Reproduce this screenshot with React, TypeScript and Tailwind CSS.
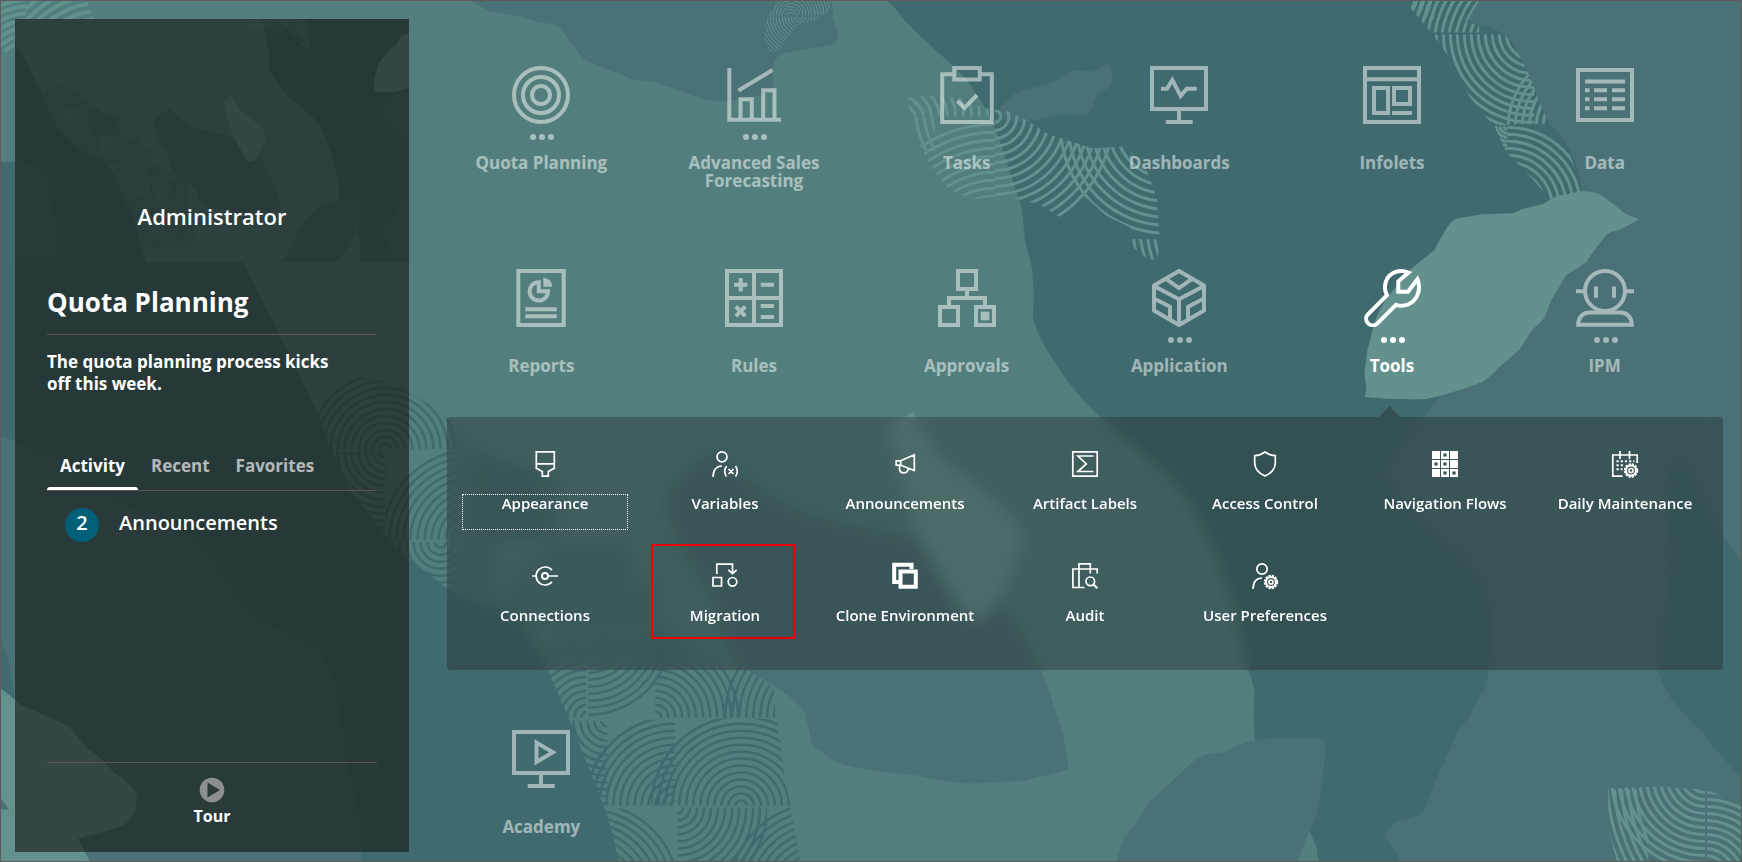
import { useState } from "react";
import type { ReactNode } from "react";
import { clsx } from "clsx";

/* ─── Wallpaper ──────────────────────────────────────────────────────────── */
type ArcSet = {
  cx: number;
  cy: number;
  from: number;
  to: number;
  step: number;
  /* visible window of the set: x, y, width, height */
  box: [number, number, number, number];
};

const SNAKE_ARCS: ArcSet[] = [
  { cx: 385, cy: 450, from: 6, to: 78, step: 7, box: [300, 360, 180, 89] },
  { cx: 385, cy: 452, from: 6, to: 92, step: 7, box: [300, 452, 85, 88] },
  { cx: 472, cy: 540, from: 6, to: 92, step: 7, box: [385, 452, 160, 88] },
  { cx: 540, cy: 470, from: 6, to: 92, step: 7, box: [472, 440, 90, 100] },
  { cx: 440, cy: 542, from: 6, to: 92, step: 7, box: [360, 542, 140, 88] },
  { cx: 590, cy: 630, from: 6, to: 92, step: 7, box: [500, 542, 160, 88] },
  { cx: 587, cy: 718, from: 6, to: 88, step: 7, box: [500, 632, 86, 86] },
  { cx: 588, cy: 632, from: 6, to: 88, step: 7, box: [588, 632, 90, 87] },
  { cx: 655, cy: 718, from: 6, to: 88, step: 7, box: [655, 632, 90, 86] },
  { cx: 822, cy: 718, from: 48, to: 102, step: 7, box: [715, 632, 60, 86] },
  { cx: 607, cy: 721, from: 6, to: 90, step: 7, box: [540, 721, 67, 85] },
  { cx: 675, cy: 807, from: 6, to: 92, step: 7, box: [585, 720, 90, 86] },
  { cx: 741, cy: 807, from: 6, to: 92, step: 7, box: [651, 719, 140, 87] },
  { cx: 587, cy: 895, from: 50, to: 92, step: 7, box: [587, 809, 90, 86] },
  { cx: 677, cy: 808, from: 6, to: 90, step: 7, box: [677, 808, 90, 87] },
  { cx: 820, cy: 895, from: 42, to: 92, step: 7, box: [720, 808, 90, 87] },
];

const TASKS_ARCS: ArcSet[] = [
  { cx: 995, cy: 258, from: 62, to: 140, step: 8, box: [900, 118, 95, 90] },
  { cx: 995, cy: 116, from: 6, to: 122, step: 8, box: [995, 108, 120, 130] },
  { cx: 1167, cy: 127, from: 42, to: 112, step: 8, box: [1055, 120, 110, 116] },
  { cx: 900, cy: 120, from: 8, to: 95, step: 8, box: [900, 92, 100, 24] },
  { cx: 1000, cy: 110, from: 68, to: 90, step: 8, box: [905, 117, 30, 34] },
  { cx: 1290, cy: 215, from: 130, to: 160, step: 7, box: [1120, 239, 40, 24] },
];

const RIBBON_ARCS: ArcSet[] = [
  { cx: 1540, cy: 50, from: 50, to: 140, step: 7, box: [1400, 0, 80, 32] },
  { cx: 1350, cy: -20, from: 70, to: 100, step: 7, box: [1405, 0, 30, 20] },
  { cx: 1533, cy: 33, from: 12, to: 96, step: 7, box: [1435, 34, 100, 91] },
  { cx: 1587, cy: 127, from: 36, to: 80, step: 7, box: [1505, 70, 50, 54] },
  { cx: 1508, cy: 207, from: 38, to: 82, step: 7, box: [1508, 126, 80, 80] },
  { cx: 1508, cy: 126, from: 3, to: 24, step: 4, box: [1490, 126, 18, 24] },
];

const CORNER_ARCS: ArcSet[] = [
  { cx: 1706, cy: 776, from: 10, to: 98, step: 7, box: [1609, 786, 97, 80] },
  { cx: 1706, cy: 880, from: 10, to: 90, step: 7, box: [1708, 786, 40, 80] },
  { cx: 1790, cy: 780, from: 154, to: 196, step: 7, box: [1609, 790, 40, 76] },
];

const FINGER_ARCS: ArcSet[] = [
  { cx: 791, cy: 15, from: 3, to: 46, step: 3, box: [760, 0, 80, 15] },
  { cx: 800, cy: 16, from: 3, to: 46, step: 3, box: [760, 16, 60, 38] },
];

const TOP_LEFT_ARCS: ArcSet[] = [
  { cx: 102, cy: 90, from: 64, to: 112, step: 8, box: [25, 0, 70, 20] },
  { cx: 34, cy: 90, from: 50, to: 98, step: 7, box: [0, 0, 25, 70] },
];

function arcPath({ cx, cy, from, to, step }: ArcSet) {
  let d = "";
  for (let r = from; r <= to; r += step) {
    d += `M${cx - r} ${cy}a${r} ${r} 0 1 1 ${2 * r} 0a${r} ${r} 0 1 1 ${-2 * r} 0`;
  }
  return d;
}

function ArcGroup({ id, sets, color, outline, width = 3 }: {
  id: string;
  sets: ArcSet[];
  color: string;
  outline: string;
  width?: number;
}) {
  return (
    <g clipPath={`url(#${id})`} fill="none" stroke={color} strokeWidth={width}>
      <clipPath id={id}>
        <path d={outline} />
      </clipPath>
      {sets.map((set, i) => (
        <g key={i} clipPath={`url(#${id}-${i})`}>
          <clipPath id={`${id}-${i}`}>
            <rect x={set.box[0]} y={set.box[1]} width={set.box[2]} height={set.box[3]} />
          </clipPath>
          <path d={arcPath(set)} />
        </g>
      ))}
    </g>
  );
}

function Wallpaper() {
  return (
    <svg
      aria-hidden="true"
      viewBox="0 0 1742 862"
      preserveAspectRatio="xMidYMid slice"
      className="absolute inset-0 h-full w-full"
    >
      <g id="wallpaper">
        <rect width="1742" height="960" fill="#406b6e" />
        {/* light continent */}
        <path
          fill="#527f7d"
          d="M0 0H887Q896 8 905 20L922 37L947 60L966 78L987 110L995 127L1003 150L1017 193L1022 207L1025 240L1032 267Q1035 292 1033 317Q1038 334 1047 350L1067 380L1083 400L1100 417L1135 445L1173 480Q1198 510 1213 543L1233 600L1249 670L1255 690L1254 720L1256 745L1310 831L1317 847L1319 862L1322 940H645L619 862L606 813L569 720L547 670Q530 620 490 608Q455 598 440 583L410 561L383 534L350 491L327 441L317 413L302 383L273 323L242 262Q190 190 60 166L15 161L0 162Z"
        />
        {/* grey shapes */}
        <g fill="#4a7276">
          <path d="M469 0L490 11L515 15L539 22Q556 23 561 29L570 42L583 58Q600 68 620 73L632 79L653 81L687 93Q705 100 717 101L733 100L760 95Q772 92 773 83L773 67Q774 56 783 53L833 44Q838 40 838 33L833 17L832 0Z" />
          <path d="M1000 108L1013 95Q1018 91 1027 89L1053 82L1072 70L1090 71Q1100 70 1108 62Q1114 72 1111 83Q1109 90 1098 92L1090 112Q1086 116 1078 115L1060 114L1043 118L1023 122L1005 120Z" />
          <path d="M1480 0L1467 20L1490 26L1502 32L1513 42L1528 70L1548 120L1567 143Q1580 165 1584 192L1500 300L1438 400L1425 417L1400 450Q1388 464 1390 480L1417 517L1460 553Q1480 570 1487 593L1492 627L1489 673L1485 690L1477 702Q1470 720 1458 732L1452 747L1438 777L1430 797Q1426 811 1421 815L1398 822Q1387 829 1385 837Q1396 848 1400 862L1427 940H1742V0Z" />
          <path d="M714 450L700 462Q672 478 667 500Q668 530 693 567L710 592L729 655L747 670L772 685Q793 697 805 713L811 740Q812 748 820 751Q836 765 855 768L879 772L917 776L942 781Q958 784 975 784L1025 781L1069 770L1064 737L1049 690L1041 670L1023 633Q1014 618 1003 608L950 560Q930 542 880 532L833 522L793 510L747 480Z" />
          <path d="M1061 940L1098 900L1117 862Q1121 844 1125 837L1134 827L1150 802L1171 783L1190 765Q1202 754 1208 754Q1220 754 1223 753L1236 746L1256 740Q1285 738 1321 739Q1326 739 1326 742L1324 773Q1320 797 1317 817L1310 831L1298 862Q1284 900 1242 940Z" />
          <path d="M0 436L33 449Q65 462 73 475L100 494L133 509L150 513L187 534L213 558L227 584L260 621L290 634L320 651L333 678L340 721L347 764L357 808L361 862L358 940H0Z" />
        </g>
        <g fill="#406b6e">
          <path d="M1673 460Q1687 455 1693 468L1707 507L1722 533L1733 547L1742 563V778L1714 747L1706 734L1697 728L1690 719L1674 702Q1664 688 1659 670L1660 633L1670 600L1673 550L1667 493Z" />
          <path d="M0 643L7 658Q9 675 13 691L14 702L0 690Z" />
        </g>
        {/* bright leaves */}
        <g fill="#63918e">
          <path d="M1365 397L1367 390L1365 373L1368 350L1375 323Q1379 310 1388 297L1410 270L1435 250L1443 235L1450 224Q1454 219 1459 218L1483 214L1513 213Q1519 211 1523 209L1543 204L1557 196L1583 191Q1594 191 1600 194Q1607 198 1613 203L1627 214L1640 219L1620 230Q1611 231 1607 235L1595 250L1587 262L1567 275L1552 300L1545 318L1533 330L1520 350L1500 367Q1491 377 1483 382L1467 388L1440 396L1427 399Q1395 400 1365 397Z" />
          <path d="M913 412L900 420Q888 422 890 435L900 477L917 533L940 577L963 613Q974 628 990 613Q1012 580 1022 543Q1022 525 1007 510L980 487L940 457Z" />
          <path d="M0 689L13 699Q21 708 33 711L67 726L87 749L96 755L113 773Q134 787 136 797Q136 812 130 818Q125 826 117 828L77 839L89 862L110 940H0V810L8 810L0 799Z" />
        </g>
        <ArcGroup
          id="snake"
          sets={SNAKE_ARCS}
          color="#406b6e"
          width={2.5}
          outline="M317 413L319 392Q335 375 351 377Q370 377 393 384L435 408L498 461L541 471L604 508L630 540L636 588L651 577L688 604L730 656L773 688L784 773L800 862V940H645L619 862L606 813L569 720L547 670Q530 620 490 608Q455 598 440 583L410 561L383 534L350 491L327 441Z"
        />
        <ArcGroup
          id="whale"
          sets={TASKS_ARCS}
          color="#63918e"
          outline="M907 98L925 95L960 97L985 108L1008 111L1027 120L1047 133L1067 140L1093 148L1127 146L1147 170L1157 197L1160 237L1158 260L1148 259L1131 245L1130 227L1107 216L1087 198L1060 217L1040 204L1017 199L997 196L973 199L950 190L933 170L920 145L913 127Z"
        />
        <ArcGroup
          id="ribbon"
          sets={RIBBON_ARCS}
          color="#63918e"
          outline="M1405 0H1480L1467 22L1490 26L1502 32L1513 42L1528 70L1548 120L1567 143L1584 192L1552 200L1530 175L1507 152L1496 128L1470 96L1452 60L1432 32Z"
        />
        <ArcGroup
          id="corner"
          sets={CORNER_ARCS}
          color="#63918e"
          outline="M1609 789L1658 787L1705 790L1742 803V862H1618L1609 830Z"
        />
        <ArcGroup
          id="finger"
          sets={FINGER_ARCS}
          color="#63918e"
          width={1}
          outline="M776 0H832L828 12L815 20L798 24L788 36L780 49L771 52L764 40L765 25L770 12Z"
        />
        <ArcGroup
          id="topleft"
          sets={TOP_LEFT_ARCS}
          color="#63918e"
          width={4}
          outline="M0 0H86L94 20L40 40L15 70L0 45Z"
        />
      </g>
    </svg>
  );
}

/* ─── Large icons (58 × 58) ──────────────────────────────────────────────── */
function BigIcon({ children }: { children: ReactNode }) {
  return (
    <svg
      aria-hidden="true"
      viewBox="0 0 58 58"
      fill="none"
      stroke="currentColor"
      strokeWidth="4"
      className="h-[58px] w-[58px]"
    >
      {children}
    </svg>
  );
}

const MONITOR = <path d="M2 2h54v41H2zM29 43v13M15.7 56h27" />;

const BIG_ICONS: Record<string, ReactNode> = {
  target: (
    <>
      <circle cx="29" cy="29" r="27" />
      <circle cx="29" cy="29" r="18" />
      <circle cx="29" cy="29" r="9" />
    </>
  ),
  forecast: <path d="M4.3 2v51.7H56M15.5 53V33.3h11.3V53M38.2 53V24.3h11.3V53M13.5 24.5L47.5 4" />,
  tasks: <path d="M14.3 8.2H4.2V56h49.6V8.2H43.7M16.3 2h25.4v11.5H16.3zM19.5 35l7 7L39 29" />,
  dashboards: (
    <>
      {MONITOR}
      <path d="M11 22.7h6l5.3-8.7 8.4 16 6-7.3h10" />
    </>
  ),
  infolets: <path d="M2 2h54v54H2zM2 13.2h54M11 22h14v25H11zM31 22h16v16H31zM29 47h20" />,
  data: (
    <path d="M2 4h54v50H2zM9 15.5h40M9 24.3h4.5M18 24.3h13M36 24.3h13M9 33.3h4.5M18 33.3h13M36 33.3h13M9 42.3h4.5M18 42.3h13M36 42.3h13" />
  ),
  reports: (
    <>
      <path d="M6.3 2h45.4v54H6.3zM13.3 40.2h31.4M13.3 47.2h31.4M26.8 13.2V22.3H36A9.2 9.2 0 1 1 26.8 13.2z" />
      <path d="M31.3 8.7a9 9 0 0 1 9 9h-9z" fill="currentColor" stroke="none" />
    </>
  ),
  rules: (
    <path d="M2 2h54v54H2zM29 2v54M2 29h54M15.7 9v13.4M9 15.7h13.4M35.7 15.7H49M10.8 37.5l9.6 9.6M20.4 37.5l-9.6 9.6M35.7 37H49M35.7 48H49" />
  ),
  approvals: (
    <>
      <path d="M20 2h18v18H20zM29 20v9M11 38v-9h36v9M2 38h18v18H2zM38 38h18v18H38z" />
      <path d="M42.7 42.7h8.6v8.6h-8.6z" fill="currentColor" stroke="none" />
    </>
  ),
  application: (
    <path
      strokeLinejoin="round"
      d="M29 2L54 16.5v25L29 56 4 41.5v-25zM4 17l25 13.3L54 17M29 30.3V56M16 9.8l13 9.4 13-9.4M4 29.5l16 8.2V51M54 29.5l-16 8.2V51"
    />
  ),
  tools: (
    <path d="M45.5 3.6C35 -.6 23 4.5 22 17c-.3 3.4.4 6.4 2 9.2L4.7 45.5a6.6 6.6 0 0 0 9.3 9.3L33 35.8c4 1.4 8.2 1.3 12-.3C55 31 58.3 20 54.4 10.3L45 22.7h-9.7V12.3z" />
  ),
  ipm: (
    <>
      <circle cx="29" cy="22" r="20" />
      <path d="M0 22.3h8M50 22.3h8M20 17.5v11.3M38 17.5v11.3M2.2 55.8h53.6c0-7.5-4.8-12.3-11-12.3H13.2C7 43.5 2.2 48.3 2.2 55.8z" />
    </>
  ),
  academy: (
    <>
      {MONITOR}
      <path d="M24.5 12.6L41 22.3L24.5 32z" />
    </>
  ),
};

/* ─── Small icons (26 × 26) ──────────────────────────────────────────────── */
function SmallIcon({ children }: { children: ReactNode }) {
  return (
    <svg
      aria-hidden="true"
      viewBox="0 0 26 26"
      fill="none"
      stroke="currentColor"
      strokeWidth="1.7"
      className="h-[26px] w-[26px] overflow-visible"
    >
      {children}
    </svg>
  );
}

function Gear({ cx, cy }: { cx: number; cy: number }) {
  return (
    <>
      <circle cx={cx} cy={cy} r="6" fill="currentColor" stroke="none" />
      <circle cx={cx} cy={cy} r="6.2" strokeWidth="2" strokeDasharray="2.2 1.05" />
      <circle cx={cx} cy={cy} r="3.4" stroke="#3d5558" strokeWidth="1.1" />
      <circle cx={cx} cy={cy} r="1.2" fill="#3d5558" stroke="none" />
    </>
  );
}

const FLOW_CELLS = [1, 0, 1, 0, 0, 1, 1, 0, 0];

const SMALL_ICONS: Record<string, ReactNode> = {
  appearance: <path d="M4.3.8h18v16.4l-6 3.3v4.7h-6v-4.7l-6-3.3zM4.3 12.8h18" />,
  variables: (
    <>
      <circle cx="10" cy="5.8" r="5" />
      <path d="M1 26c.3-7 3-11 9-11M14.5 15c-2.3 3.4-2.3 7.4 0 10.5M23.5 15c2.3 3.4 2.3 7.4 0 10.5M16.5 18l5 5M21.5 18l-5 5" />
    </>
  ),
  announcements: (
    <path d="M22.3 3.8v15.8L8.7 14.2V9.8zM8.7 9.8H4.2v4.4h4.5M7.5 14.5v2.7c0 6.3 8.7 6 8.7.3" />
  ),
  artifact: <path d="M.8.8h24.4v24.4H.8zM21.5 5H6l8.3 8L6 20.5h15.5" />,
  access: (
    <path d="M13 1c3 2.3 6.5 3.5 10.3 3.7v7c0 6-4 10.5-10.3 13.3C6.7 22.2 2.7 17.7 2.7 11.7v-7C6.5 4.5 10 3.3 13 1z" />
  ),
  flows: (
    <>
      {FLOW_CELLS.map((solid, i) => (
        <rect
          key={i}
          x={(i % 3) * 9 + 1.2}
          y={Math.floor(i / 3) * 9 + 1.2}
          width="5.6"
          height="5.6"
          strokeWidth="2.4"
          fill={solid ? "currentColor" : "none"}
        />
      ))}
    </>
  ),
  maintenance: (
    <>
      <path d="M10.5 25.2H.8V4h24.4v8M8 0v8M17.5 0v8" />
      <path d="M4.5 10.3h18M4.5 14.3h8M4.5 18.3h6" strokeDasharray="2.2 2" strokeWidth="2" />
      <Gear cx={19} cy={19.5} />
    </>
  ),
  connections: (
    <>
      <path d="M20 7.2A9 9 0 1 0 20 18.8M.3 13h3.7M16 13h10" />
      <circle cx="13" cy="13" r="3" strokeWidth="2" />
    </>
  ),
  migration: (
    <>
      <path d="M1 14.5h8.5V23H1zM4.8 11V1.2h15.7v9M16.3 6.8l4.2 3.9 4.2-3.9" />
      <circle cx="20.5" cy="18.8" r="4.3" />
    </>
  ),
  clone: (
    <path d="M19.5 6V1.8H2.2V19H7M8.5 8.5h15.3v15.3H8.5z" strokeWidth="4" />
  ),
  audit: (
    <>
      <path d="M12.5 24.5H.9V6h24.3v4.5M7 24.5V.8h11.3v9.7" />
      <circle cx="18.3" cy="18.3" r="4.3" />
      <path d="M21.5 21.5l3.8 3.7" strokeWidth="2" />
    </>
  ),
  preferences: (
    <>
      <circle cx="10" cy="6" r="5.2" />
      <path d="M1 26c.3-7 3-11 9-11" />
      <Gear cx={19} cy={19} />
    </>
  ),
};

/* ─── Data ───────────────────────────────────────────────────────────────── */
type Tile = { label: string; icon: string; more?: boolean };

const TILES: Tile[] = [
  { label: "Quota Planning", icon: "target", more: true },
  { label: "Advanced Sales Forecasting", icon: "forecast", more: true },
  { label: "Tasks", icon: "tasks" },
  { label: "Dashboards", icon: "dashboards" },
  { label: "Infolets", icon: "infolets" },
  { label: "Data", icon: "data" },
  { label: "Reports", icon: "reports" },
  { label: "Rules", icon: "rules" },
  { label: "Approvals", icon: "approvals" },
  { label: "Application", icon: "application", more: true },
  { label: "Tools", icon: "tools", more: true },
  { label: "IPM", icon: "ipm", more: true },
];

const TOOLS = [
  { label: "Appearance", icon: "appearance", focused: true },
  { label: "Variables", icon: "variables" },
  { label: "Announcements", icon: "announcements" },
  { label: "Artifact Labels", icon: "artifact" },
  { label: "Access Control", icon: "access" },
  { label: "Navigation Flows", icon: "flows" },
  { label: "Daily Maintenance", icon: "maintenance" },
  { label: "Connections", icon: "connections" },
  { label: "Migration", icon: "migration", marked: true },
  { label: "Clone Environment", icon: "clone" },
  { label: "Audit", icon: "audit" },
  { label: "User Preferences", icon: "preferences" },
];

const TABS = ["Activity", "Recent", "Favorites"];

/* ─── Sidebar ────────────────────────────────────────────────────────────── */
function Sidebar() {
  const [tab, setTab] = useState("Activity");

  return (
    <aside className="relative mt-[18px] mb-[9px] ml-[14px] flex w-[394px] shrink-0 flex-col text-white">
      <div className="relative flex h-[243px] items-end justify-center overflow-hidden pb-[30px]">
        <svg
          aria-hidden="true"
          viewBox="229 168 1247 769"
          preserveAspectRatio="xMidYMid slice"
          className="absolute inset-0 h-full w-full"
        >
          <use href="#wallpaper" />
        </svg>
        <div className="absolute inset-0 bg-[#161513]/60" />
        <p className="relative text-[22px] leading-8 font-semibold">Administrator</p>
      </div>

      <div className="flex flex-1 flex-col bg-[#161513]/60 px-8 pt-5">
        <h1 className="text-[26px] leading-10 font-bold">Quota Planning</h1>
        <hr className="mt-3 border-[#5b5450]" />
        <p className="mt-4 text-[17px] leading-[22px] font-bold">
          The quota planning process kicks
          <br />
          off this week.
        </p>

        <div role="tablist" className="mt-[57px] flex border-b border-[#5b5450]">
          {TABS.map((name) => (
            <button
              key={name}
              type="button"
              role="tab"
              aria-selected={tab === name}
              onClick={() => setTab(name)}
              className={clsx(
                "relative px-[13px] pb-[10px] text-[17px] leading-7 font-bold",
                tab === name ? "text-white" : "text-white/65",
              )}
            >
              {name}
              {tab === name && (
                <span className="absolute inset-x-0 bottom-0 h-[3px] rounded-t-sm bg-white" />
              )}
            </button>
          ))}
        </div>

        <a href="#announcements" className="mt-[17px] ml-[18px] flex items-center gap-5">
          <span className="flex h-[34px] w-[34px] items-center justify-center rounded-full bg-[#006079] pb-1 text-xl font-semibold">
            2
          </span>
          <span className="pb-1 text-xl font-semibold">Announcements</span>
        </a>

        <div className="mt-auto flex flex-col items-center border-t border-[#5b5450] pt-[14px] pb-6">
          <button type="button" className="flex flex-col items-center text-base leading-6 font-bold">
            <svg aria-hidden="true" viewBox="0 0 26 26" className="mb-px h-[26px] w-[26px]">
              <circle cx="13" cy="13" r="12.3" fill="#8b8f91" />
              <path d="M8.5 5.5L21 13L8.5 20.5z" fill="#2c3a39" />
            </svg>
            Tour
          </button>
        </div>
      </div>
    </aside>
  );
}

/* ─── Springboard ────────────────────────────────────────────────────────── */
function TileLink({ tile, active }: { tile: Tile; active?: boolean }) {
  return (
    <a
      href={`#${tile.icon}`}
      className={clsx(
        "flex h-[130px] flex-col items-center text-white",
        !active && "opacity-50",
      )}
    >
      <BigIcon>{BIG_ICONS[tile.icon]}</BigIcon>
      <span className="flex h-[30px] gap-[3px] pt-[10px] pl-0.5">
        {tile.more &&
          [0, 1, 2].map((dot) => <i key={dot} className="h-[6px] w-[6px] rounded-full bg-white" />)}
      </span>
      <span className="w-[150px] text-center text-[17px] leading-[18px] font-bold">
        {tile.label}
      </span>
    </a>
  );
}

function ToolsPanel() {
  return (
    <section
      aria-label="Tools"
      className="relative mt-[18px] ml-3 rounded bg-[#161513]/30 px-2 pt-[34px] pb-7 backdrop-blur-sm"
    >
      <span
        className="absolute bottom-full left-[73%] h-[11px] w-[22px] bg-[#161513]/30
                   [clip-path:polygon(50%_0,100%_100%,0_100%)]"
      />
      <div className="grid grid-cols-7 gap-y-[33px]">
        {TOOLS.map((tool) => (
          <a
            key={tool.label}
            href={`#${tool.icon}`}
            className="relative flex flex-col items-center px-[7px] text-white"
          >
            <SmallIcon>{SMALL_ICONS[tool.icon]}</SmallIcon>
            <span
              className={clsx(
                "mt-[17px] h-9 w-full text-center text-[15px] leading-[18px] font-semibold",
                tool.focused && "outline-1 -outline-offset-1 outline-dotted outline-white",
              )}
            >
              {tool.label}
            </span>
            {tool.marked && (
              <span className="absolute -top-[19px] right-5 left-4 h-[95px] border-2 border-[#f00000]" />
            )}
          </a>
        ))}
      </div>
    </section>
  );
}

export default function App() {
  return (
    <div className="relative flex min-h-screen overflow-hidden border border-[#5f5a5c] bg-[#406b6e] font-['Open_Sans','Noto_Sans',sans-serif]">
      <Wallpaper />
      <Sidebar />
      <main className="relative min-w-0 flex-1 pt-[65px] pr-[18px] pl-[26px]">
        <nav aria-label="Springboard" className="grid grid-cols-6 gap-y-[73px] pr-3">
          {TILES.map((tile) => (
            <TileLink key={tile.label} tile={tile} active={tile.label === "Tools"} />
          ))}
        </nav>
        <ToolsPanel />
        <div className="mt-[60px] grid grid-cols-6 pr-3">
          <TileLink tile={{ label: "Academy", icon: "academy" }} />
        </div>
      </main>
    </div>
  );
}
